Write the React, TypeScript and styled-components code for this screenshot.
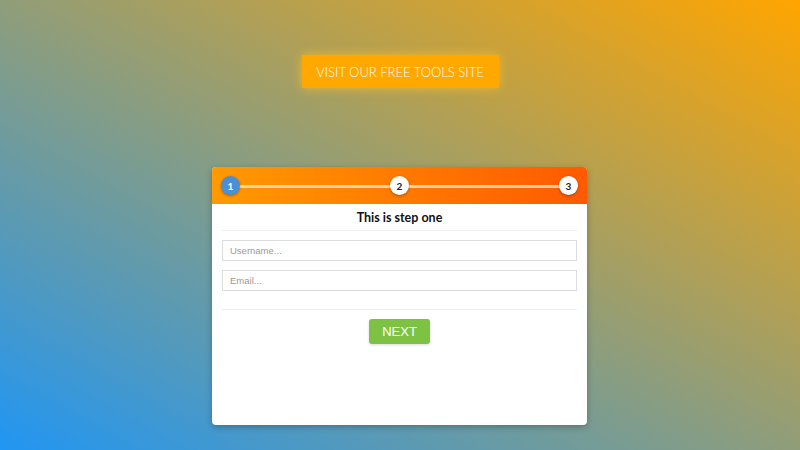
import styled, { createGlobalStyle } from "styled-components";

const Global = createGlobalStyle`
  html, body { margin: 0; padding: 0; height: 100%; }
  body {
    font-family: "Lato", "Open Sans", sans-serif;
    background: linear-gradient(to top right, #2196f3 0%, #ffa500 100%);
    min-height: 450px;
  }
  #root { height: 100%; }
`;

const Page = styled.div`
  width: 800px;
  height: 450px;
  display: flex;
  flex-direction: column;
  align-items: center;
`;

const ToolsLink = styled.a`
  margin-top: 55px;
  width: 197px;
  height: 33px;
  display: flex;
  align-items: center;
  justify-content: center;
  background: #ffa800;
  color: #fff;
  font-size: 13px;
  font-weight: 300;
  text-transform: uppercase;
  text-decoration: none;
  box-shadow: 0 0 10px rgba(255, 190, 40, 0.8);
`;

const Card = styled.div`
  margin-top: 79px;
  margin-right: 1px;
  width: 375px;
  height: 258px;
  background: #fff;
  border-radius: 4px;
  overflow: hidden;
  box-shadow: 0 2px 6px rgba(0, 0, 0, 0.25);
  display: flex;
  flex-direction: column;
`;

const Progress = styled.div`
  height: 37px;
  background: linear-gradient(to right, #ff9a00, #ff5a00);
  display: flex;
  align-items: center;
  padding: 0 9px;
  position: relative;
`;

const Track = styled.div`
  position: absolute;
  left: 19px;
  right: 19px;
  top: 50%;
  height: 3px;
  margin-top: -1px;
  background: rgba(255, 230, 190, 0.8);
`;

const Steps = styled.div`
  flex: 1;
  display: flex;
  justify-content: space-between;
  position: relative;
`;

const Dot = styled.div<{ $active?: boolean }>`
  width: 19px;
  height: 19px;
  border-radius: 50%;
  background: ${(p) => (p.$active ? "#4a90d9" : "#fff")};
  color: ${(p) => (p.$active ? "#fff" : "#222")};
  font-size: 10px;
  font-weight: 700;
  display: flex;
  align-items: center;
  justify-content: center;
  box-shadow: 0 1px 3px rgba(0, 0, 0, 0.35);
`;

const Body = styled.div`
  padding: 0 10px;
  display: flex;
  flex-direction: column;
`;

const Title = styled.h3`
  margin: 0;
  height: 26px;
  display: flex;
  align-items: center;
  justify-content: center;
  font-size: 12.5px;
  font-weight: 700;
  color: #111;
  border-bottom: 1px solid #eee;
`;

const Fields = styled.div`
  padding: 9px 0 18px;
  display: flex;
  flex-direction: column;
  gap: 9px;
  border-bottom: 1px solid #eee;
`;

const Input = styled.input`
  box-sizing: border-box;
  height: 21px;
  width: 100%;
  border: 1px solid #ddd;
  padding: 0 7px;
  font-family: "Liberation Sans", Arial, sans-serif;
  font-size: 9.5px;
  color: #333;
  outline: none;
  &::placeholder { color: #999; }
`;

const Actions = styled.div`
  display: flex;
  justify-content: center;
  padding-top: 9px;
`;

const NextButton = styled.button`
  width: 61px;
  height: 25px;
  border: none;
  border-radius: 3px;
  background: #7dc242;
  color: #fff;
  font-family: "Liberation Sans", Arial, sans-serif;
  font-size: 13px;
  box-shadow: 0 1px 3px rgba(0, 0, 0, 0.15);
`;

export default function App() {
  return (
    <>
      <Global />
      <Page>
        <ToolsLink href="#">Visit our free tools site</ToolsLink>
        <Card>
          <Progress>
            <Track />
            <Steps>
              <Dot $active>1</Dot>
              <Dot>2</Dot>
              <Dot>3</Dot>
            </Steps>
          </Progress>
          <Body>
            <Title>This is step one</Title>
            <Fields>
              <Input placeholder="Username..." />
              <Input placeholder="Email..." />
            </Fields>
            <Actions>
              <NextButton>NEXT</NextButton>
            </Actions>
          </Body>
        </Card>
      </Page>
    </>
  );
}
